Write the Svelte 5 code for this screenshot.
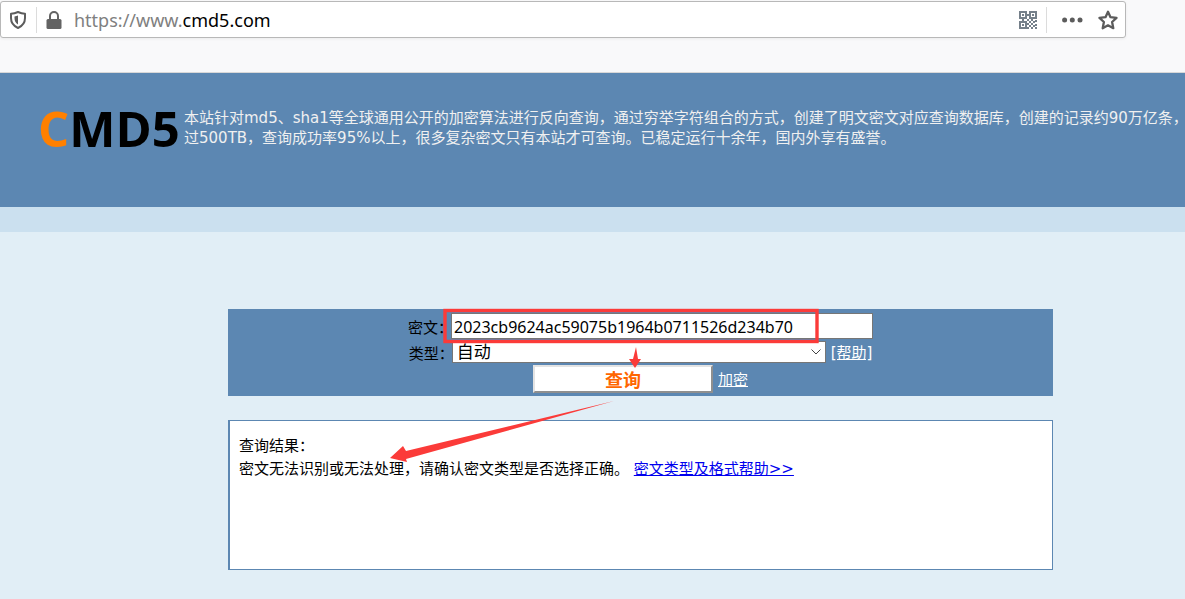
<script lang="ts">
	let hash = $state('2023cb9624ac59075b1964b0711526d234b70');
	let type = $state('auto');
</script>

<div class="toolbar">
	<div class="urlbar">
		<button class="icon-button" aria-label="Tracking protection">
			<svg width="18" height="20" viewBox="0 0 18 20">
				<path d="M9 2 Q12.500 3.700 16 3.700 V8 C16 13 13.500 16 9 18 C4.500 16 2 13 2 8 V3.700 Q5.500 3.700 9 2Z" fill="none" stroke="#5c5c5c" stroke-width="2" stroke-linejoin="round" />
				<path d="M9 5.500 V14.500 C6.500 13 5.500 11 5.500 8 V6.500 Q7.500 6.200 9 5.500Z" fill="#5c5c5c" />
			</svg>
		</button>
		<span class="divider"></span>
		<button class="icon-button lock" aria-label="Site information">
			<svg width="16" height="18" viewBox="0 0 16 18">
				<path d="M4 9 V5 a4 4 0 0 1 8 0 V9" fill="none" stroke="#636363" stroke-width="2" />
				<rect x="0.500" y="8" width="15" height="10" rx="1.500" fill="#636363" />
			</svg>
		</button>
		<a class="url" href="https://www.cmd5.com">https://www.<span>cmd5.com</span></a>
		<button class="icon-button" aria-label="QR code">
			<svg width="18" height="18" viewBox="0 0 18 18" fill="#75808a">
				<path fill-rule="evenodd" d="M0 0H8V8H0ZM2 2V6H6V2ZM10 0H18V8H10ZM12 2V6H16V2ZM0 10H8V18H0ZM2 12V16H6V12Z" />
				<path d="M3 3h2v2H3zM13 3h2v2h-2zM3 13h2v2H3zM8 3h2v2H8zM3 8h2v2H3zM8 8h2v2H8zM12 8h2v2h-2zM16 9h2v2h-2zM10 10h2v2h-2zM14 10h2v2h-2zM8 12h2v2H8zM12 12h2v2h-2zM16 13h2v2h-2zM10 14h2v2h-2zM14 14h2v2h-2zM12 16h2v2h-2zM8 16h2v2H8zM16 16h2v2h-2z" />
			</svg>
		</button>
		<span class="divider"></span>
		<button class="icon-button dots" aria-label="Page actions">
			<svg width="22" height="6" viewBox="0 0 22 6" fill="#5c5c5c">
				<circle cx="2.600" cy="3" r="2.500" />
				<circle cx="10.300" cy="3" r="2.500" />
				<circle cx="18" cy="3" r="2.500" />
			</svg>
		</button>
		<button class="icon-button" aria-label="Bookmark">
			<svg width="20" height="20" viewBox="0 0 20 20">
				<path d="M10 1.800 L12.500 7.200 L18.500 7.900 L14.100 12 L15.300 18.200 L10 15.300 L4.700 18.200 L5.900 12 L1.500 7.900 L7.500 7.200Z" fill="none" stroke="#5c5c5c" stroke-width="2.300" stroke-linejoin="round" />
			</svg>
		</button>
	</div>
</div>

<header>
	<div class="logo"><span>C</span>MD5</div>
	<p>
		本站针对md5、sha1等全球通用公开的加密算法进行反向查询，通过穷举字符组合的方式，创建了明文密文对应查询数据库，创建的记录约90万亿条，<br />
		过500TB，查询成功率95%以上，很多复杂密文只有本站才可查询。已稳定运行十余年，国内外享有盛誉。
	</p>
</header>
<div class="band"></div>

<main>
	<form onsubmit={(e) => e.preventDefault()}>
		<div class="row">
			<label for="hash">密文：</label>
			<input id="hash" type="text" bind:value={hash} />
		</div>
		<div class="row">
			<label for="type">类型：</label>
			<div class="select-wrap">
				<select id="type" bind:value={type}>
					<option value="auto">自动</option>
				</select>
				<svg class="chevron" width="10" height="6" viewBox="0 0 10 6">
					<path d="M0.500 0.500 L5 5 L9.500 0.500" fill="none" stroke="#444" />
				</svg>
			</div>
			<a class="side-link" href="#help">[帮助]</a>
		</div>
		<div class="row">
			<button class="submit" type="submit">查询</button>
			<a class="side-link" href="#encrypt">加密</a>
		</div>
	</form>

	<section class="result">
		<div>查询结果：</div>
		<div>密文无法识别或无法处理，请确认密文类型是否选择正确。 <a href="#types">密文类型及格式帮助&gt;&gt;</a></div>
	</section>

	<svg class="marks" width="480" height="160" viewBox="0 0 480 160" fill="#fb3b39">
		<rect x="45" y="1.500" width="372" height="31" fill="none" stroke="#fb3b39" stroke-width="3.400" />
		<path d="M236 38 L238 50 L241 50 L235 59 L229 50 L233 50Z" />
		<path d="M214 92 L6 142 L3 137 L-10 149 L7 153 L6 150Z" />
	</svg>
</main>

<style>
	:global(body) {
		background: #e1eef6;
		font-family: 'DejaVu Sans', 'Noto Sans CJK SC', sans-serif;
		font-size: 15px;
		overflow-x: hidden;
	}

	.toolbar {
		box-sizing: border-box;
		height: 73px;
		padding: 1px 59px 0 0;
		background: #f9f9fa;
		border-bottom: 1px solid #d8d8d8;
	}

	.urlbar {
		display: flex;
		align-items: center;
		gap: 9px;
		box-sizing: border-box;
		height: 37px;
		padding: 0 7px 0 8px;
		background: #fff;
		border: 1px solid #b8b8b8;
		border-radius: 3px;
		box-shadow: 0 1px 3px rgba(0, 0, 0, 0.06);
	}

	.icon-button {
		display: flex;
		padding: 0;
		background: none;
		border: 0;
	}

	.lock {
		margin-right: 3px;
	}

	.dots {
		margin: 0 5px 0 6px;
	}

	.divider {
		width: 1px;
		height: 26px;
		background: #dcdcdc;
	}

	.url {
		flex: 1;
		color: #808080;
		font-family: 'Noto Sans', sans-serif;
		font-size: 18px;
		line-height: 24px;
		text-decoration: none;
	}

	.url span {
		color: #000;
	}

	header {
		display: flex;
		box-sizing: border-box;
		height: 134px;
		padding: 35px 0 0 38px;
		background: #5c87b2;
	}

	.logo {
		flex: none;
		width: 146px;
		color: #000;
		font-family: 'Open Sans', sans-serif;
		font-size: 49px;
		font-weight: 700;
		line-height: 40px;
	}

	.logo span {
		color: #ff8000;
	}

	header p {
		margin: 0;
		color: #f0f0f0;
		line-height: 20px;
		white-space: nowrap;
	}

	.band {
		height: 25px;
		background: #cbe0ef;
	}

	main {
		position: relative;
		margin: 77px 132px 29px 228px;
	}

	form {
		display: flex;
		flex-direction: column;
		gap: 2px;
		padding: 4px 0 3px;
		background: #5c87b2;
	}

	.row {
		display: flex;
		justify-content: center;
		align-items: center;
	}

	label {
		width: 43px;
		white-space: nowrap;
	}

	input,
	select {
		box-sizing: border-box;
		background: #fff;
		border: 1px solid #767676;
		border-radius: 0;
		color: #000;
		font-family: 'Noto Sans', 'Noto Sans CJK SC', sans-serif;
	}

	input {
		width: 422px;
		height: 26px;
		padding: 1px 2px 0;
		font-size: 16px;
	}

	.select-wrap {
		position: relative;
		display: flex;
	}

	select {
		width: 374px;
		height: 22px;
		padding: 0 4px;
		font-size: 17px;
		line-height: 20px;
		appearance: none;
	}

	.chevron {
		position: absolute;
		right: 5px;
		top: 8px;
		pointer-events: none;
	}

	.side-link {
		margin-left: 5px;
		padding-top: 2px;
		color: #fff;
		line-height: 20px;
	}

	.submit {
		box-sizing: border-box;
		width: 180px;
		height: 28px;
		padding: 0;
		background: #fff;
		border: 2px outset #e3e3e3;
		color: #ff6600;
		font-family: 'Noto Sans CJK SC', sans-serif;
		font-size: 18px;
		font-weight: 700;
		line-height: 22px;
	}

	.result {
		box-sizing: border-box;
		min-height: 150px;
		margin-top: 24px;
		padding: 14px 9px;
		background: #fff;
		border: 1px solid #5c87b2;
		border-left-width: 2px;
		line-height: 23px;
	}

	.result a {
		color: #0000ee;
	}

	.marks {
		position: absolute;
		top: 0;
		left: 50%;
		margin-left: -241px;
		overflow: visible;
		pointer-events: none;
	}
</style>
